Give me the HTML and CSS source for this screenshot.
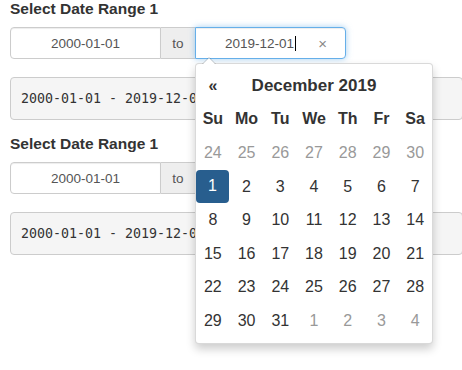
FILE: index.html
```html
<!DOCTYPE html>
<html lang="en">
<head>
    <meta charset="UTF-8">
    <title>Select Date Range</title>
    <link rel="stylesheet" href="styles.css">
</head>
<body>
    <!-- 第一个日期范围 -->
    <div class="form-group picker-open">
        <label class="control-label">Select Date Range 1</label>
        <div class="input-daterange">
            <input class="form-control" type="text" value="2000-01-01">
            <span class="input-group-addon">to</span>
            <div class="form-control focused">
                <span class="value">2019-12-01</span><span class="text-caret"></span>
                <span class="clear">&times;</span>
            </div>
        </div>

        <!-- 下拉日历 -->
        <div class="datepicker-dropdown">
            <div class="days">
                <span class="prev">&laquo;</span>
                <span class="switch">December 2019</span>
                <span class="next"></span>

                <span class="dow">Su</span><span class="dow">Mo</span><span class="dow">Tu</span><span class="dow">We</span><span class="dow">Th</span><span class="dow">Fr</span><span class="dow">Sa</span>

                <span class="day old">24</span><span class="day old">25</span><span class="day old">26</span><span class="day old">27</span><span class="day old">28</span><span class="day old">29</span><span class="day old">30</span>
                <span class="day active">1</span><span class="day">2</span><span class="day">3</span><span class="day">4</span><span class="day">5</span><span class="day">6</span><span class="day">7</span>
                <span class="day">8</span><span class="day">9</span><span class="day">10</span><span class="day">11</span><span class="day">12</span><span class="day">13</span><span class="day">14</span>
                <span class="day">15</span><span class="day">16</span><span class="day">17</span><span class="day">18</span><span class="day">19</span><span class="day">20</span><span class="day">21</span>
                <span class="day">22</span><span class="day">23</span><span class="day">24</span><span class="day">25</span><span class="day">26</span><span class="day">27</span><span class="day">28</span>
                <span class="day">29</span><span class="day">30</span><span class="day">31</span><span class="day new">1</span><span class="day new">2</span><span class="day new">3</span><span class="day new">4</span>
            </div>
        </div>
    </div>
    <pre class="shiny-text-output">2000-01-01 - 2019-12-01</pre>

    <!-- 第二个日期范围 -->
    <div class="form-group">
        <label class="control-label">Select Date Range 1</label>
        <div class="input-daterange">
            <input class="form-control" type="text" value="2000-01-01">
            <span class="input-group-addon">to</span>
            <input class="form-control" type="text" value="2019-12-01">
        </div>
    </div>
    <pre class="shiny-text-output">2000-01-01 - 2019-12-01</pre>
</body>
</html>
```

FILE: styles.css
```css
/* 基础样式 */
html {
    height: 100%;
    overflow: hidden;
}

body {
    box-sizing: border-box;
    min-height: 100%;
    margin: 0;
    padding: 0 10px;
    font-family: "Liberation Sans", Arial, sans-serif;
    color: #333;
    background: #fff;
}

.form-group {
    position: relative;
    margin-bottom: 18px;
}

.control-label {
    display: block;
    font-size: 15.5px;
    font-weight: bold;
    line-height: 18px;
    margin-bottom: 9px;
}

/* 输入框组 */
.input-daterange {
    display: flex;
    width: 336px;
    height: 32px;
}

.form-control {
    box-sizing: border-box;
    width: 151px;
    height: 32px;
    margin: 0;
    padding: 0 12px;
    border: 1px solid #ccc;
    background: #fff;
    color: #555;
    font-family: inherit;
    font-size: 13.5px;
    text-align: center;
    box-shadow: inset 0 1px 1px rgba(0, 0, 0, 0.075);
    outline: none;
}

.input-daterange .form-control:first-child {
    border-radius: 4px 0 0 4px;
}

.input-daterange .form-control:last-child {
    border-radius: 0 4px 4px 0;
}

.input-group-addon {
    box-sizing: border-box;
    width: 34px;
    display: flex;
    align-items: center;
    justify-content: center;
    background: #eee;
    border: solid #ccc;
    border-width: 1px 0;
    color: #555;
    font-size: 13.5px;
}

.form-control.focused {
    display: flex;
    align-items: center;
    padding: 0 18px 0 29px;
    border-color: #66afe9;
    box-shadow: inset 0 1px 1px rgba(0, 0, 0, 0.075), 0 0 6px rgba(102, 175, 233, 0.6);
}

.text-caret {
    width: 1px;
    height: 15px;
    margin-left: 1px;
    background: #000;
}

.clear {
    margin-left: auto;
    color: #888;
    font-size: 15px;
}

/* 输出框 */
.shiny-text-output {
    box-sizing: border-box;
    height: 43px;
    margin: 0 -11px 15px 0;
    padding: 0 10px;
    line-height: 41px;
    font-family: "DejaVu Sans Mono", "Liberation Mono", monospace;
    font-size: 13.3px;
    color: #333;
    background: #f5f5f5;
    border: 1px solid #ccc;
    border-radius: 4px;
}

/* 下拉日历 */
.datepicker-dropdown {
    position: absolute;
    top: 63px;
    left: 185px;
    z-index: 10;
    box-sizing: border-box;
    width: 238px;
    padding: 5px 0;
    background: #fff;
    border: 1px solid rgba(0, 0, 0, 0.15);
    border-radius: 4px;
    box-shadow: 0 5px 10px rgba(0, 0, 0, 0.2);
}

.datepicker-dropdown::before {
    content: '';
    position: absolute;
    top: -7px;
    left: 6px;
    border-left: 7px solid transparent;
    border-right: 7px solid transparent;
    border-bottom: 7px solid rgba(0, 0, 0, 0.2);
}

.datepicker-dropdown::after {
    content: '';
    position: absolute;
    top: -6px;
    left: 7px;
    border-left: 6px solid transparent;
    border-right: 6px solid transparent;
    border-bottom: 6px solid #fff;
}

.days {
    display: grid;
    grid-template-columns: repeat(7, 1fr);
    grid-auto-rows: 33.6px;
}

.days span {
    display: flex;
    align-items: center;
    justify-content: center;
    font-size: 16px;
    border-radius: 4px;
}

.prev {
    font-weight: bold;
    font-size: 17px;
}

.switch {
    grid-column: span 5;
    font-weight: bold;
    font-size: 17px !important;
}

.dow {
    font-weight: bold;
}

.day.old,
.day.new {
    color: #999;
}

.day.active {
    background: #285e8e;
    color: #fff;
    margin: 0 0.7px 0.6px 0;
}
```
